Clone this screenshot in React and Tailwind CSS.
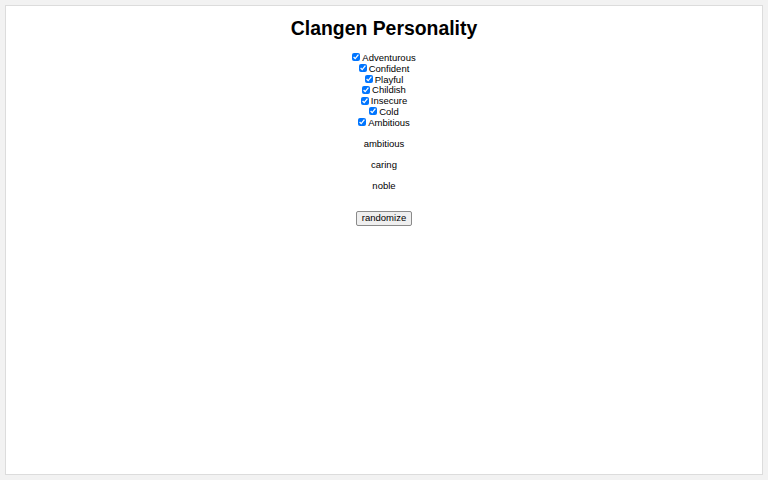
import { useState } from 'react';

const TRAITS = ['Adventurous', 'Confident', 'Playful', 'Childish', 'Insecure', 'Cold', 'Ambitious'];
const RESULTS = ['ambitious', 'caring', 'noble'];

export default function App() {
  const [checked, setChecked] = useState(() => TRAITS.map(() => true));

  const toggle = i => setChecked(prev => prev.map((v, j) => (j === i ? !v : v)));

  return <div className="h-[480px] w-[768px] bg-[#f2f2f2] p-[5px] font-['Liberation_Sans',Arial,sans-serif] text-black">
    <div className="flex h-full flex-col items-center border border-[#dcdcdc] bg-white">
      <h1 className="mt-[10px] text-[19.4px] font-bold leading-[24px]">Clangen Personality</h1>

      <div className="mt-[12px] flex flex-col items-center">
        {TRAITS.map((trait, i) => <label key={trait} className="flex h-[10.8px] items-center text-[9.5px] leading-[11px]">
          <input
            type="checkbox"
            checked={checked[i]}
            onChange={() => toggle(i)}
            className="mr-[2px] h-[8px] w-[8px] accent-[#0075ff]"
          />
          {trait}
        </label>)}
      </div>

      <div className="mt-[10px] flex flex-col items-center gap-[10px] text-[9.5px] leading-[11px]">
        {RESULTS.map(r => <p key={r}>{r}</p>)}
      </div>

      <button
        type="button"
        className="mt-[20px] h-[15px] rounded-[2px] border border-[#8a8a8a] bg-[#efefef] px-[4.5px] text-[9.5px] leading-[12px]"
      >
        randomize
      </button>
    </div>
  </div>;
}
